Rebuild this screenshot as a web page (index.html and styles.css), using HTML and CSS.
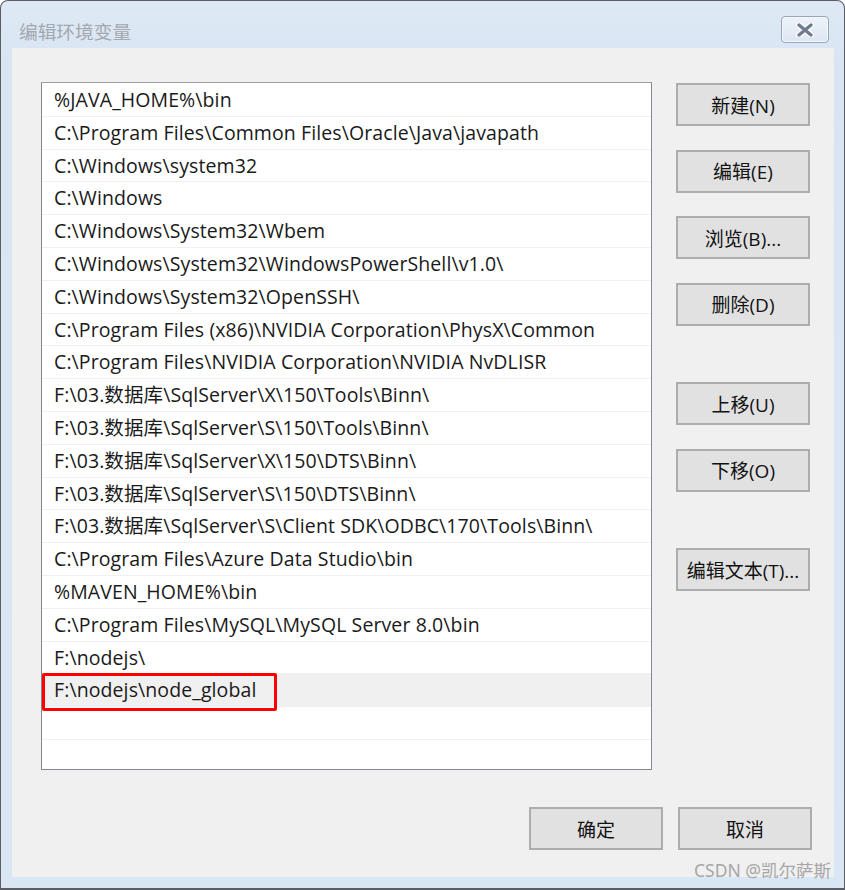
FILE: index.html
```html
<!DOCTYPE html>
<html lang="zh-CN">
<head>
    <meta charset="UTF-8">
    <title>编辑环境变量</title>
    <link rel="stylesheet" href="styles.css">
</head>
<body>
    <div class="window">
        <div class="titlebar">
            <span class="title">编辑环境变量</span>
            <div class="close">
                <svg width="22" height="14" viewBox="0 0 22 14">
                    <path d="M5 2 L17 12 M17 2 L5 12" stroke="#fff" stroke-width="6" stroke-linecap="round"/>
                    <path d="M5 2 L17 12 M17 2 L5 12" stroke="#6f7c90" stroke-width="3.4" stroke-linecap="round"/>
                </svg>
            </div>
        </div>
        <div class="content">
            <div class="main">
                <div class="list">
                    <div class="row">%JAVA_HOME%\bin</div>
                    <div class="row">C:\Program Files\Common Files\Oracle\Java\javapath</div>
                    <div class="row">C:\Windows\system32</div>
                    <div class="row">C:\Windows</div>
                    <div class="row">C:\Windows\System32\Wbem</div>
                    <div class="row">C:\Windows\System32\WindowsPowerShell\v1.0\</div>
                    <div class="row">C:\Windows\System32\OpenSSH\</div>
                    <div class="row">C:\Program Files (x86)\NVIDIA Corporation\PhysX\Common</div>
                    <div class="row">C:\Program Files\NVIDIA Corporation\NVIDIA NvDLISR</div>
                    <div class="row">F:\03.数据库\SqlServer\X\150\Tools\Binn\</div>
                    <div class="row">F:\03.数据库\SqlServer\S\150\Tools\Binn\</div>
                    <div class="row">F:\03.数据库\SqlServer\X\150\DTS\Binn\</div>
                    <div class="row">F:\03.数据库\SqlServer\S\150\DTS\Binn\</div>
                    <div class="row">F:\03.数据库\SqlServer\S\Client SDK\ODBC\170\Tools\Binn\</div>
                    <div class="row">C:\Program Files\Azure Data Studio\bin</div>
                    <div class="row">%MAVEN_HOME%\bin</div>
                    <div class="row">C:\Program Files\MySQL\MySQL Server 8.0\bin</div>
                    <div class="row">F:\nodejs\</div>
                    <div class="row selected">F:\nodejs\node_global<span class="mark"></span></div>
                    <div class="row"></div>
                </div>
                <div class="side">
                    <button class="btn">新建(N)</button>
                    <button class="btn">编辑(E)</button>
                    <button class="btn">浏览(B)...</button>
                    <button class="btn">删除(D)</button>
                    <button class="btn far">上移(U)</button>
                    <button class="btn">下移(O)</button>
                    <button class="btn far">编辑文本(T)...</button>
                </div>
            </div>
            <div class="footer">
                <button class="btn">确定</button>
                <button class="btn">取消</button>
            </div>
        </div>
        <div class="watermark">CSDN @凯尔萨斯</div>
    </div>
</body>
</html>
```

FILE: styles.css
```css
body {
    margin: 0;
    padding: 0;
    background-color: #ffffff;
    font-family: "Open Sans", "Noto Sans CJK SC", sans-serif;
}
.window {
    position: relative;
    width: 845px;
    height: 890px;
    box-sizing: border-box;
    border: 1px solid #5a5d63;
    border-bottom-width: 2px;
    border-radius: 8px 8px 0 0;
    background: linear-gradient(#dfe9f5, #d8e5f3 60px, #d9e6f4);
    overflow: hidden;
}
.titlebar {
    height: 47px;
    display: flex;
    justify-content: space-between;
    align-items: flex-start;
}
.title {
    margin: 16px 0 0 18px;
    font-family: "Noto Sans CJK SC", sans-serif;
    font-size: 18.7px;
    line-height: 28px;
    color: #a3a8ae;
}
.close {
    margin: 15px 15px 0 0;
    width: 46px;
    height: 25px;
    border: 1px solid #98a6bb;
    border-radius: 4px;
    background: linear-gradient(#eef3f9, #dde6f1);
    box-shadow: inset 0 0 0 1px #f4f7fb;
    display: flex;
    align-items: center;
    justify-content: center;
}
.content {
    margin: 0 10px 0 11px;
    height: 829px;
    background-color: #f0f0f0;
    padding: 34px 0 0 29px;
    box-sizing: border-box;
}
.main {
    display: flex;
}
.list {
    width: 611px;
    height: 688px;
    box-sizing: border-box;
    border: 1px solid #828790;
    border-top-color: #a0a0a0;
    background-color: #fff;
    padding-top: 1px;
}
.row {
    position: relative;
    height: 32.8px;
    box-sizing: border-box;
    border-bottom: 1px solid #f0f0f0;
    padding-left: 12px;
    font-size: 19.5px;
    letter-spacing: 0.1px;
    line-height: 32px;
    color: #1a1a1a;
    white-space: nowrap;
}
.row.selected {
    background-color: #f0f0f0;
}
.mark {
    position: absolute;
    left: 0;
    top: -1px;
    width: 235px;
    height: 38px;
    box-sizing: border-box;
    border: 3px solid #ff0000;
    border-radius: 2px;
}
.side {
    display: flex;
    flex-direction: column;
    gap: 23.5px;
    margin-left: 24px;
    padding-top: 1px;
}
.side .far {
    margin-top: 33px;
}
.btn {
    width: 134px;
    height: 43px;
    box-sizing: border-box;
    border: 2px solid #adadad;
    background-color: #e1e1e1;
    font-family: "Open Sans", "Noto Sans CJK SC", sans-serif;
    font-size: 19px;
    color: #111;
    padding: 0;
}
.footer {
    display: flex;
    justify-content: flex-end;
    gap: 15px;
    margin-top: 37px;
    padding-right: 22px;
}
.watermark {
    position: absolute;
    right: 13px;
    bottom: 6px;
    font-family: "Noto Sans", "Noto Sans CJK SC", sans-serif;
    font-size: 17.5px;
    color: #a7a7a7;
}
```
